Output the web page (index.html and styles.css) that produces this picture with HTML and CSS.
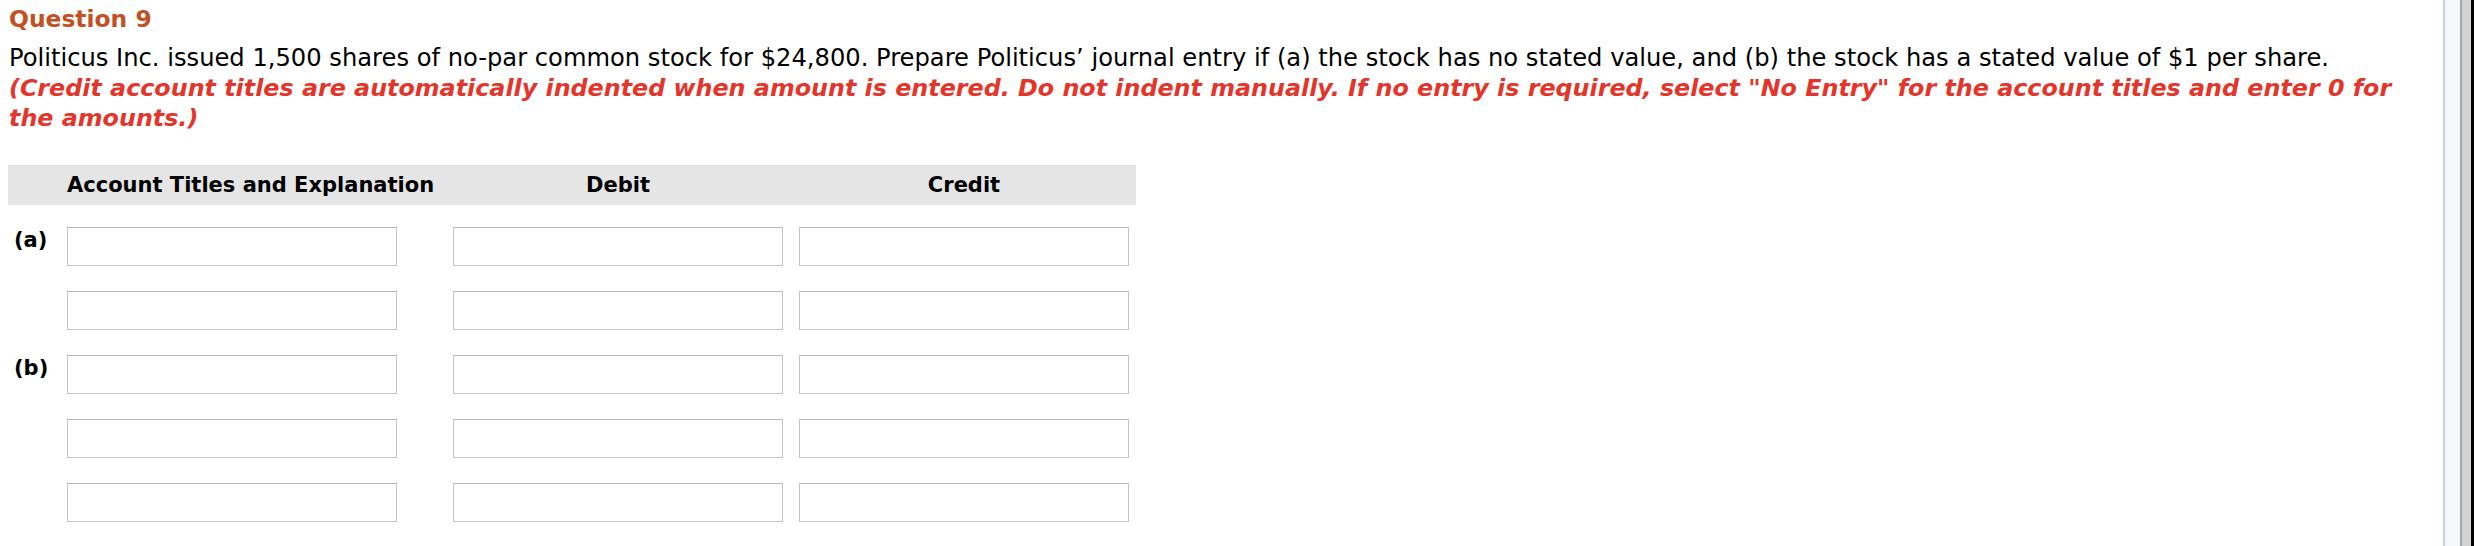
FILE: index.html
```html
<!DOCTYPE html>
<html lang="en">

<head>
  <meta charset="UTF-8">
  <meta name="viewport" content="width=device-width, initial-scale=1.0">
  <title>Question 9</title>
  <link rel="stylesheet" href="styles.css">
</head>

<body>

  <div class="page">
    <!-- Question Area -->
    <div class="content">
      <div class="question-title">Question 9</div>

      <div class="question-text">
        Politicus Inc. issued 1,500 shares of no-par common stock for $24,800. Prepare Politicus’ journal entry if (a) the stock has no stated value, and (b) the stock has a stated value of $1 per share.
        <span class="instructions">(Credit account titles are automatically indented when amount is entered. Do not indent manually. If no entry is required, select "No Entry" for the account titles and enter 0 for the amounts.)</span>
      </div>

      <!-- Journal Table -->
      <div class="journal">
        <div class="journal-head">
          <span class="head-label"></span>
          <span class="head-cell head-account">Account Titles and Explanation</span>
          <span class="head-cell">Debit</span>
          <span class="head-cell">Credit</span>
        </div>

        <div class="journal-row">
          <span class="row-label">(a)</span>
          <input type="text" class="field">
          <input type="text" class="field">
          <input type="text" class="field">
        </div>
        <div class="journal-row">
          <span class="row-label"></span>
          <input type="text" class="field">
          <input type="text" class="field">
          <input type="text" class="field">
        </div>
        <div class="journal-row">
          <span class="row-label">(b)</span>
          <input type="text" class="field">
          <input type="text" class="field">
          <input type="text" class="field">
        </div>
        <div class="journal-row">
          <span class="row-label"></span>
          <input type="text" class="field">
          <input type="text" class="field">
          <input type="text" class="field">
        </div>
        <div class="journal-row">
          <span class="row-label"></span>
          <input type="text" class="field">
          <input type="text" class="field">
          <input type="text" class="field">
        </div>
      </div>
    </div>

    <!-- Side Strip -->
    <div class="side-strip">
      <div class="scroll-track"></div>
    </div>
  </div>

</body>

</html>
```

FILE: styles.css
```css
/* Page */
body {
  margin: 0;
  background: #ffffff;
  font-family: "DejaVu Sans", Verdana, sans-serif;
  color: #000;
}

.page {
  display: flex;
  height: 546px;
  overflow: hidden;
}

/* Main Content */
.content {
  width: 2434px;
  padding-left: 9px;
  background: #fff;
}

/* Question Title */
.question-title {
  font-size: 23.4px;
  font-weight: bold;
  color: #c4501f;
  padding-top: 5px;
  line-height: 28px;
}

/* Question Text */
.question-text {
  font-size: 24.2px;
  line-height: 30px;
  margin-top: 10px;
  width: 2410px;
}

.instructions {
  display: block;
  color: #e5352a;
  font-size: 23.8px;
  font-weight: bold;
  font-style: italic;
}

/* Journal Table */
.journal {
  margin-top: 32px;
  margin-left: -1px;
  width: 1128px;
}

.journal-head {
  display: grid;
  grid-template-columns: 59px 386px 346px 337px;
  height: 40px;
  align-items: center;
  background: #e5e5e5;
  font-size: 21px;
  font-weight: bold;
}

.head-cell {
  width: 330px;
  text-align: center;
  white-space: nowrap;
}

.head-account {
  width: 364px;
}

.journal-row {
  display: grid;
  grid-template-columns: 59px 386px 346px 337px;
  align-items: start;
  margin-top: 22px;
}

.journal-row + .journal-row {
  margin-top: 25px;
}

.row-label {
  font-size: 21px;
  font-weight: bold;
  padding-left: 6px;
  line-height: 26px;
}

/* Form Fields */
.field {
  width: 330px;
  height: 39px;
  box-sizing: border-box;
  border: 1px solid #c4c4c4;
  border-top-color: #b8b8b8;
  margin: 0;
  padding: 0 6px;
  background: #fff;
  outline: none;
}

/* Side Strip */
.side-strip {
  flex: 1;
  display: flex;
  border-left: 2px solid #c9d0da;
  background: #f7f8fa;
  justify-content: flex-end;
}

.scroll-track {
  width: 9px;
  background: #d2d2d2;
  border-left: 2px solid #a6a6a6;
  border-right: 3px solid #000;
}
```
